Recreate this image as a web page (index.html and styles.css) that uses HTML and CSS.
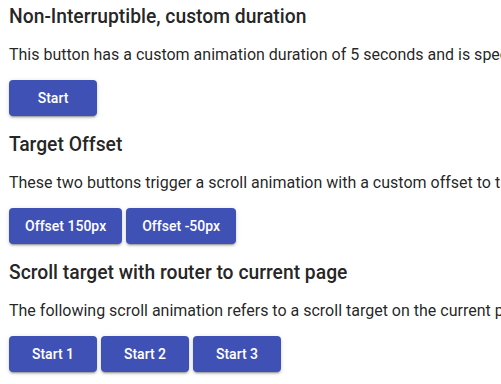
FILE: index.html
```html
<!doctype html>
<html lang="en">

<head>
  <meta charset="UTF-8">
  <title>Scroll demo</title>
  <link rel="stylesheet" href="styles.css">
</head>

<body>

  <div class="page">
    <section class="demo">
      <h2>Non-Interruptible, custom duration</h2>
      <p>This button has a custom animation duration of 5 seconds and is specified as non-interruptible.</p>
      <div class="actions">
        <button class="btn">Start</button>
      </div>
    </section>

    <section class="demo">
      <h2>Target Offset</h2>
      <p>These two buttons trigger a scroll animation with a custom offset to the target.</p>
      <div class="actions">
        <button class="btn">Offset 150px</button>
        <button class="btn">Offset -50px</button>
      </div>
    </section>

    <section class="demo">
      <h2>Scroll target with router to current page</h2>
      <p>The following scroll animation refers to a scroll target on the current page.</p>
      <div class="actions">
        <button class="btn">Start 1</button>
        <button class="btn">Start 2</button>
        <button class="btn">Start 3</button>
      </div>
    </section>
  </div>

</body>

</html>
```

FILE: styles.css
```css
* {
  margin: 0px;
  padding: 0px;
}

body {
  font-family: Roboto, "Helvetica Neue", sans-serif;
  color: rgba(0, 0, 0, .87);
  background: #fff;
  overflow: hidden;
}

.page {
  padding: 5px 0 0 9px;
  white-space: nowrap;
}

.demo {
  padding-bottom: 17px;
}

.demo h2 {
  font-family: "Roboto Medium", Roboto, sans-serif;
  font-size: 19.3px;
  font-weight: 500;
  line-height: 24px;
}

.demo p {
  font-size: 16px;
  line-height: 20px;
  margin-top: 16px;
}

.actions {
  display: flex;
  gap: 4px;
  margin-top: 15px;
}

.btn {
  font-family: "Roboto Medium", Roboto, sans-serif;
  font-size: 14px;
  font-weight: 500;
  color: #fff;
  background: #3f51b5;
  border: none;
  border-radius: 4px;
  min-width: 88px;
  padding: 0 16px;
  line-height: 36px;
  box-shadow: 0 3px 1px -2px rgba(0, 0, 0, .2), 0 2px 2px 0 rgba(0, 0, 0, .14), 0 1px 5px 0 rgba(0, 0, 0, .12);
}
```
